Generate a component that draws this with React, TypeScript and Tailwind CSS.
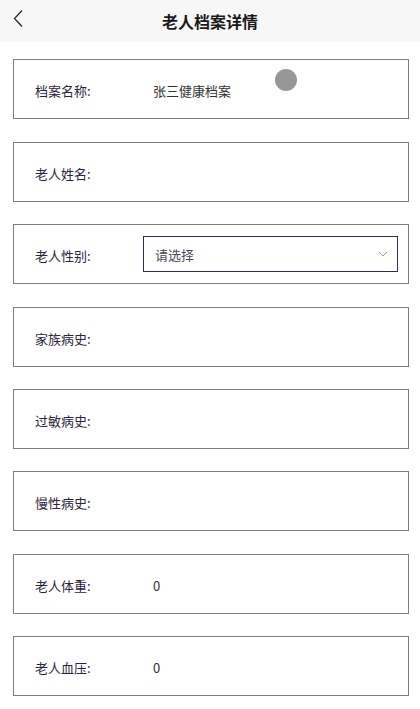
import React from "react";

const rows: { label: string; value?: string; select?: boolean; dot?: boolean }[] = [
  { label: "档案名称:", value: "张三健康档案", dot: true },
  { label: "老人姓名:" },
  { label: "老人性别:", select: true },
  { label: "家族病史:" },
  { label: "过敏病史:" },
  { label: "慢性病史:" },
  { label: "老人体重:", value: "0" },
  { label: "老人血压:", value: "0" },
];

export default function App() {
  return (
    <div
      className="w-[420px] h-[709px] bg-white overflow-hidden"
      style={{ fontFamily: '"Noto Sans CJK SC", "Noto Sans", sans-serif' }}
    >
      <div className="relative h-[42px] bg-[#f7f7f7] flex items-center justify-center">
        <svg
          className="absolute left-[12px] top-[9px]"
          width="12"
          height="19"
          viewBox="0 0 12 19"
          fill="none"
        >
          <polyline points="10,1.5 2.5,9.5 10,17.5" stroke="#222" strokeWidth="1.2" />
        </svg>
        <span className="text-[16px] font-bold text-[#1a1a1a] leading-none">老人档案详情</span>
      </div>
      <div className="flex flex-col gap-[22.43px] mt-[17.3px]">
        {rows.map((r, i) => (
          <div
            key={i}
            className="relative ml-[13px] w-[396px] h-[60px] border border-[#7d7d7d] flex items-center"
          >
            <span className="pl-[21px] pt-[3px] w-[129px] shrink-0 text-[13px] text-[#2e2540] leading-none">
              {r.label}
            </span>
            {r.select ? (
              <div className="w-[255px] h-[36px] border border-[#3b2a55] flex items-center justify-between pl-[11px] pr-[9px]">
                <span className="text-[13px] text-[#4a4a5a] leading-none">请选择</span>
                <svg width="10" height="6" viewBox="0 0 10 6" fill="none">
                  <polyline points="1,1 5,5 9,1" stroke="#9a9a9a" strokeWidth="1" />
                </svg>
              </div>
            ) : r.value ? (
              <span className="pl-[10px] pt-[3px] text-[13px] text-[#333] leading-none">{r.value}</span>
            ) : null}
            {r.dot && (
              <div className="absolute left-[261px] top-[9px] w-[22px] h-[22px] rounded-full bg-[#979797]" />
            )}
          </div>
        ))}
      </div>
    </div>
  );
}
